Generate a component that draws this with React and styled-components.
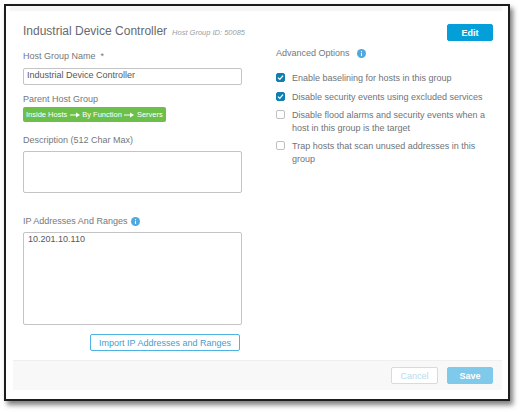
import React from 'react'
import styled, {createGlobalStyle} from 'styled-components'

const GlobalStyle = createGlobalStyle`
  html, body {
    margin: 0;
    padding: 0;
    background: #ffffff;
    font-family: "Liberation Sans", Arial, sans-serif;
    color: #6b6f73;
  }
`

const Page = styled.div`
  width: 522px;
  height: 414px;
  padding: 4px 0 0 4px;
  box-sizing: border-box;
  overflow: hidden;
`

const Dialog = styled.div`
  width: 506px;
  height: 397px;
  box-sizing: border-box;
  border: 2px solid #1d1d1d;
  background: #ffffff;
  box-shadow: 3px 4px 5px rgba(0, 0, 0, 0.5);
  display: flex;
  flex-direction: column;
`

const TopStrip = styled.div`
  height: 5px;
  margin: 0 6px 0 4px;
  background: #f6f6f6;
  flex: none;
`

const Body = styled.div`
  flex: 1;
  display: flex;
  padding: 0 9px 0 17px;
  min-height: 0;
`

const LeftColumn = styled.div`
  width: 236px;
  flex: none;
  display: flex;
  flex-direction: column;
  padding-top: 10px;
`

const RightColumn = styled.div`
  flex: 1;
  min-width: 0;
  display: flex;
  flex-direction: column;
  padding: 11px 0 0 17px;
`

const TitleRow = styled.div`
  display: flex;
  align-items: baseline;
  gap: 5px;
  height: 20px;
  line-height: 20px;
  white-space: nowrap;
`

const Title = styled.span`
  font-size: 12px;
  color: #666a6e;
`

const GroupId = styled.span`
  font-size: 7.5px;
  font-style: italic;
  color: #9a9ea2;
`

const Label = styled.label`
  display: flex;
  align-items: center;
  gap: ${(p) => p.$gap || 0}px;
  font-size: 9px;
  line-height: 12px;
  color: #74787c;
  margin-top: ${(p) => p.$top || 0}px;
`

const Input = styled.div`
  width: 219px;
  height: 17px;
  box-sizing: border-box;
  border: 1px solid #c4c4c4;
  border-radius: 2px;
  padding-left: 3px;
  margin-top: 6px;
  font-size: 9px;
  line-height: 13px;
  color: #54585c;
`

const TextArea = styled.div`
  width: 219px;
  height: ${(p) => p.$height}px;
  box-sizing: border-box;
  border: 1px solid #c4c4c4;
  border-radius: 2px;
  padding: 0 4px;
  margin-top: ${(p) => p.$top || 5}px;
  font-size: 9px;
  line-height: 12px;
  color: #54585c;
`

const Breadcrumb = styled.div`
  align-self: flex-start;
  display: flex;
  align-items: center;
  gap: 2.5px;
  height: 15px;
  padding: 0 3px;
  margin-top: 2px;
  border-radius: 2px;
  background: #6cc04a;
  color: #ffffff;
  font-size: 7.5px;
  white-space: nowrap;
`

const ImportRow = styled.div`
  display: flex;
  justify-content: flex-end;
  width: 217px;
  margin-top: 9px;
`

const Button = styled.button`
  box-sizing: border-box;
  width: ${(p) => p.$width}px;
  height: 17px;
  padding: 0;
  border-radius: 2px;
  border: 1px solid ${(p) => p.$border};
  background: ${(p) => p.$bg};
  color: ${(p) => p.$color};
  font-family: inherit;
  font-size: ${(p) => p.$size || 9}px;
  font-weight: ${(p) => p.$weight || 400};
`

const EditRow = styled.div`
  display: flex;
  justify-content: flex-end;
  margin-top: 2px;
  padding-right: 6px;
`

const OptionList = styled.div`
  display: flex;
  flex-direction: column;
  gap: 6px;
  margin-top: 13px;
`

const Option = styled.div`
  display: flex;
  gap: 7px;
  width: 216px;
  font-size: 9px;
  line-height: 12.5px;
  color: #6f7377;
`

const Box = styled.span`
  flex: none;
  width: 9px;
  height: 9px;
  margin-top: 1px;
  box-sizing: border-box;
  border-radius: 2px;
  border: 1px solid ${(p) => (p.$checked ? '#0f7fb0' : '#c0c0c0')};
  background: ${(p) => (p.$checked ? '#0f7fb0' : '#ffffff')};
  display: flex;
  align-items: center;
  justify-content: center;
`

const Footer = styled.div`
  flex: none;
  height: 30px;
  margin: 0 6px 9px 7px;
  padding: 0 9px 0 0;
  box-sizing: border-box;
  border-top: 1px solid #efefef;
  background: #f8f8f8;
  display: flex;
  align-items: center;
  justify-content: flex-end;
  gap: 9px;
`

const InfoDot = ({size = 9}) => (
  <svg width={size} height={size} viewBox="0 0 10 10">
    <circle cx="5" cy="5" r="5" fill="#4fa9dc" />
    <rect x="4.4" y="4.2" width="1.2" height="3.6" fill="#ffffff" />
    <rect x="4.4" y="2.2" width="1.2" height="1.2" fill="#ffffff" />
  </svg>
)

const Arrow = () => (
  <svg width="10" height="6" viewBox="0 0 10 6">
    <path d="M0 3H7" stroke="#ffffff" strokeWidth="1" />
    <path d="M6 0.5L10 3L6 5.5Z" fill="#ffffff" />
  </svg>
)

const Check = () => (
  <svg width="7" height="7" viewBox="0 0 7 7">
    <path d="M1 3.6L2.8 5.4L6 1.6" fill="none" stroke="#ffffff" strokeWidth="1.3" />
  </svg>
)

const options = [
  {text: 'Enable baselining for hosts in this group', checked: true},
  {text: 'Disable security events using excluded services', checked: true},
  {text: 'Disable flood alarms and security events when a host in this group is the target', checked: false},
  {text: 'Trap hosts that scan unused addresses in this group', checked: false},
]

const App = () => {
  return (
    <Page>
      <GlobalStyle />
      <Dialog>
        <TopStrip />
        <Body>
          <LeftColumn>
            <TitleRow>
              <Title>Industrial Device Controller</Title>
              <GroupId>Host Group ID: 50085</GroupId>
            </TitleRow>
            <Label $top={9}>Host Group Name&nbsp;&nbsp;*</Label>
            <Input>Industrial Device Controller</Input>
            <Label $top={8}>Parent Host Group</Label>
            <Breadcrumb>
              Inside Hosts <Arrow /> By Function <Arrow /> Servers
            </Breadcrumb>
            <Label $top={12}>Description (512 Char Max)</Label>
            <TextArea $height={42} $top={5} />
            <Label $top={22} $gap={4}>
              IP Addresses And Ranges <InfoDot />
            </Label>
            <TextArea $height={93} $top={5}>10.201.10.110</TextArea>
            <ImportRow>
              <Button $width={150} $border="#4db3e2" $bg="#ffffff" $color="#3f9fd0">
                Import IP Addresses and Ranges
              </Button>
            </ImportRow>
          </LeftColumn>
          <RightColumn>
            <EditRow>
              <Button $width={46} $border="#049fd9" $bg="#049fd9" $color="#ffffff" $weight={700} $size={9}>
                Edit
              </Button>
            </EditRow>
            <Label $top={6} $gap={7}>
              Advanced Options <InfoDot />
            </Label>
            <OptionList>
              {options.map((o) => (
                <Option key={o.text}>
                  <Box $checked={o.checked}>{o.checked && <Check />}</Box>
                  <span>{o.text}</span>
                </Option>
              ))}
            </OptionList>
          </RightColumn>
        </Body>
        <Footer>
          <Button $width={47} $border="#bfe3f3" $bg="#ffffff" $color="#b5dcee">Cancel</Button>
          <Button $width={46} $border="#7fcaea" $bg="#7fcaea" $color="#ffffff" $weight={700} $size={9}>Save</Button>
        </Footer>
      </Dialog>
    </Page>
  )
}

export default App
